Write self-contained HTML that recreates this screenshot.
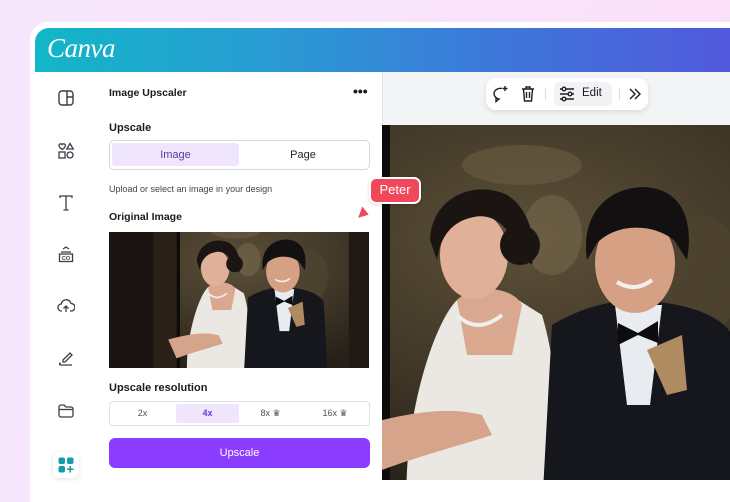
<!DOCTYPE html>
<html><head><meta charset="utf-8"><style>
*{margin:0;padding:0;box-sizing:border-box}
body{width:730px;height:480px;overflow:hidden;position:relative;font-family:"Liberation Sans",sans-serif;background:linear-gradient(100deg,#f6e6fb 0%,#f9e3fb 60%,#fbdef8 100%)}
.card{position:absolute;left:30px;top:22px;width:720px;height:480px;background:#fff;border-radius:18px 0 0 0}
.hdr{position:absolute;left:35px;top:28px;width:700px;height:44px;border-radius:14px 0 0 0;background:linear-gradient(90deg,#12b6c8 0%,#2a9ad4 35%,#3d78da 65%,#5258dc 100%)}
.logo{position:absolute;left:47px;top:33px;color:#fff;font-family:"Liberation Serif",serif;font-style:italic;font-size:27px;letter-spacing:-0.5px}
.side svg{position:absolute}
.t{position:absolute;color:#1a1a1f;font-size:11px}
.b{font-weight:bold}
.canvas{position:absolute;left:382px;top:72px;width:348px;height:408px;background:#f3f4f6;border-left:1px solid #e6e7ea}
</style></head><body>
<div class="card"></div>
<div class="hdr"></div>
<div class="logo">Canva</div>

<div class="side">
<svg style="left:57px;top:89px" width="18" height="18" viewBox="0 0 18 18" fill="none" stroke="#3a3d45" stroke-width="1.4"><rect x="2" y="2" width="14" height="14" rx="3"/><path d="M10 2v14M10 8h6"/></svg>
<svg style="left:57px;top:142px" width="18" height="18" viewBox="0 0 18 18" fill="none" stroke="#3a3d45" stroke-width="1.3"><path d="M2 3.5a1.8 1.8 0 0 1 3.2-1 1.8 1.8 0 0 1 3.2 1c0 2-3.2 4-3.2 4S2 5.5 2 3.5z"/><path d="M13 1.5l3.2 5.5H9.8z"/><rect x="2" y="10" width="6" height="6"/><circle cx="13" cy="13" r="3"/></svg>
<svg style="left:57px;top:194px" width="18" height="18" viewBox="0 0 18 18" fill="none" stroke="#3a3d45" stroke-width="1.3"><path d="M3 4V2h12v2M9 2v14M6.5 16h5"/></svg>
<svg style="left:57px;top:246px" width="18" height="18" viewBox="0 0 18 18" fill="none" stroke="#3a3d45" stroke-width="1.3"><path d="M6 3l3-2 3 2M4 6h10M2.5 8h13v7.5h-13z"/><text x="9" y="14" font-size="5.5" text-anchor="middle" fill="#3a3d45" stroke="none" font-weight="bold">CO</text></svg>
<svg style="left:57px;top:297px" width="18" height="18" viewBox="0 0 18 18" fill="none" stroke="#3a3d45" stroke-width="1.3"><path d="M5 14H4.5a3.5 3.5 0 0 1-.3-7A5 5 0 0 1 14 6.5a3.7 3.7 0 0 1 .3 7.5H13"/><path d="M9 15V9M6.5 11.5L9 9l2.5 2.5"/></svg>
<svg style="left:57px;top:349px" width="18" height="18" viewBox="0 0 18 18" fill="none" stroke="#3a3d45" stroke-width="1.3"><path d="M6 11l7-7 2 2-7 7H6z"/><path d="M4 14c-2 0-2 2 0 2h11"/></svg>
<svg style="left:57px;top:402px" width="18" height="18" viewBox="0 0 18 18" fill="none" stroke="#3a3d45" stroke-width="1.3"><path d="M2 5a2 2 0 0 1 2-2h3l2 2h5a2 2 0 0 1 2 2v6a2 2 0 0 1-2 2H4a2 2 0 0 1-2-2z"/><path d="M2 7.5h14"/></svg>
<div style="position:absolute;left:53px;top:452px;width:26px;height:26px;border-radius:6px;background:#fff;box-shadow:0 1px 4px rgba(0,0,0,.12)"></div>
<svg style="left:58px;top:457px" width="16" height="16" viewBox="0 0 16 16" fill="#159aa8"><rect x="0.5" y="0.5" width="6.5" height="6.5" rx="2"/><rect x="9" y="0.5" width="6.5" height="6.5" rx="2"/><rect x="0.5" y="9" width="6.5" height="6.5" rx="2"/><path d="M12.25 9v6.5M9 12.25h6.5" stroke="#159aa8" stroke-width="1.6"/></svg>
</div>

<div class="t b" style="left:109px;top:87px;font-size:10.5px">Image Upscaler</div>
<div class="t b" style="left:353px;top:83px;font-size:14px">•••</div>
<div class="t b" style="left:109px;top:122px;font-size:11px">Upscale</div>
<div style="position:absolute;left:109px;top:140px;width:261px;height:30px;border:1px solid #d7d8dc;border-radius:5px"></div>
<div style="position:absolute;left:112px;top:143px;width:127px;height:23px;background:#efe6fd;border-radius:3px"></div>
<div class="t" style="left:112px;top:149px;width:127px;text-align:center;color:#5a3a9a;font-size:11px">Image</div>
<div class="t" style="left:239px;top:149px;width:128px;text-align:center;color:#222;font-size:11px">Page</div>
<div class="t" style="left:109px;top:184px;font-size:9px;color:#444">Upload or select an image in your design</div>
<div class="t b" style="left:109px;top:211px;font-size:10.5px">Original Image</div>

<svg width="0" height="0" style="position:absolute"><defs>
<radialGradient id="bk" cx="50%" cy="30%" r="70%"><stop offset="0" stop-color="#5c5038"/><stop offset=".6" stop-color="#3e3526"/><stop offset="1" stop-color="#262019"/></radialGradient>
<g id="scene">
<rect x="-170" y="0" width="640" height="380" fill="url(#bk)"/>
<ellipse cx="140" cy="40" rx="60" ry="20" fill="#6a5d45" opacity=".6"/>
<ellipse cx="170" cy="110" rx="30" ry="40" fill="#7a6c50" opacity=".5"/>
<ellipse cx="320" cy="150" rx="40" ry="60" fill="#4e4530" opacity=".7"/>
<rect x="-170" y="0" width="120" height="380" fill="#1a1512"/>
<rect x="-55" y="0" width="60" height="380" fill="#2a2118"/>
<rect x="0" y="0" width="8" height="380" fill="#0e0c0a"/>
<rect x="410" y="0" width="60" height="380" fill="#201a14"/>
<path d="M25 385 C20 300 50 200 75 175 L125 168 L160 190 C175 240 178 300 172 385 Z" fill="#ebe8e4"/>
<path d="M75 175 C90 160 130 160 140 180 L130 230 L85 230 Z" fill="#d9a88f"/>
<path d="M-20 300 C20 290 60 280 100 290 L110 310 C80 320 40 330 0 345 Z" fill="#d6a48a"/>
<ellipse cx="92" cy="130" rx="34" ry="44" fill="#e0b099"/>
<path d="M48 115 C50 70 95 55 125 70 C145 82 155 110 150 140 L138 130 C128 100 110 88 92 92 C70 96 58 112 55 135 Z" fill="#1a1512"/>
<circle cx="138" cy="120" r="20" fill="#1a1512"/>
<path d="M75 190 Q95 210 120 190" stroke="#eee" stroke-width="4" fill="none"/>
<path d="M160 385 L170 200 C200 182 230 175 255 176 C300 176 340 190 350 210 L360 385 Z" fill="#16171d"/>
<path d="M233 180 L280 180 L268 280 L245 280 Z" fill="#e8ebf0"/>
<path d="M236 198 L256 208 L276 196 L276 218 L256 210 L236 220 Z" fill="#0c0c10"/>
<path d="M265 225 L300 210 L305 265 L285 270 Z" fill="#b08a60"/>
<ellipse cx="253" cy="138" rx="40" ry="50" fill="#d6a084"/>
<path d="M205 135 C198 85 230 62 262 62 C300 64 312 95 305 135 L292 115 C270 98 235 98 215 118 Z" fill="#121010"/>
<path d="M235 157 Q253 168 270 155" stroke="#f4f0ea" stroke-width="4" fill="none"/>
</g></defs></svg>

<svg style="position:absolute;left:109px;top:232px" width="260" height="136" viewBox="-161 44 619 324" preserveAspectRatio="xMidYMid slice"><use href="#scene"/></svg>

<div class="t b" style="left:109px;top:382px;font-size:11px">Upscale resolution</div>
<div style="position:absolute;left:109px;top:401px;width:261px;height:25px;border:1px solid #e0e1e4;border-radius:4px"></div>
<div style="position:absolute;left:176px;top:404px;width:63px;height:19px;background:#efe6fd;border-radius:2px"></div>
<div class="t" style="left:109px;top:408px;width:67px;text-align:center;font-size:9px;color:#555">2x</div>
<div class="t b" style="left:176px;top:408px;width:63px;text-align:center;font-size:9px;color:#6a3bd0">4x</div>
<div class="t" style="left:239px;top:408px;width:63px;text-align:center;font-size:9px;color:#555">8x ♛</div>
<div class="t" style="left:302px;top:408px;width:66px;text-align:center;font-size:9px;color:#555">16x ♛</div>
<div style="position:absolute;left:109px;top:438px;width:261px;height:30px;background:#8b3dff;border-radius:6px;color:#fff;font-size:11px;text-align:center;line-height:30px">Upscale</div>

<div class="canvas"></div>
<svg style="position:absolute;left:382px;top:125px" width="348" height="355" viewBox="0 0 348 355"><use href="#scene"/></svg>
<div style="position:absolute;left:486px;top:78px;width:162px;height:32px;background:#fff;border-radius:10px;box-shadow:0 2px 6px rgba(0,0,0,.1)"></div>
<div style="position:absolute;left:554px;top:82px;width:58px;height:24px;background:#f1f2f4;border-radius:6px"></div>
<svg style="position:absolute;left:491px;top:85px" width="20" height="18" viewBox="0 0 20 18" fill="none" stroke="#1e1f24" stroke-width="1.4"><path d="M11 3.5A6 5 0 1 0 8 14L5 16.5V13"/><path d="M14 1v5M11.5 3.5h5"/></svg>
<svg style="position:absolute;left:520px;top:85px" width="16" height="18" viewBox="0 0 16 18" fill="none" stroke="#1e1f24" stroke-width="1.4"><path d="M2 4h12M6 4V2h4v2M3.5 4l1 12h7l1-12M6.5 7v6M9.5 7v6"/></svg>
<div style="position:absolute;left:545px;top:88px;width:1px;height:12px;background:#ddd"></div>
<svg style="position:absolute;left:558px;top:85px" width="18" height="18" viewBox="0 0 18 18" fill="none" stroke="#1e1f24" stroke-width="1.4"><path d="M2 4h14M2 9h14M2 14h14"/><circle cx="6" cy="4" r="1.8" fill="#f1f2f4"/><circle cx="12" cy="9" r="1.8" fill="#f1f2f4"/><circle cx="6" cy="14" r="1.8" fill="#f1f2f4"/></svg>
<div class="t" style="left:582px;top:87px;font-size:11.5px">Edit</div>
<div style="position:absolute;left:619px;top:88px;width:1px;height:12px;background:#ddd"></div>
<svg style="position:absolute;left:627px;top:86px" width="16" height="16" viewBox="0 0 16 16" fill="none" stroke="#1e1f24" stroke-width="1.4"><path d="M3 3l5 5-5 5M8 3l5 5-5 5"/></svg>

<div style="position:absolute;left:369px;top:177px;width:52px;height:27px;background:#f0475a;border:2px solid #fff;border-radius:7px;color:#fff;font-size:13px;text-align:center;line-height:22px;box-shadow:0 1px 3px rgba(0,0,0,.15)">Peter</div>
<svg style="position:absolute;left:354px;top:202px" width="20" height="20" viewBox="0 0 20 20"><path d="M3 17L8 3L16 13Z" fill="#f0475a" stroke="#fff" stroke-width="1.5" stroke-linejoin="round"/></svg>
</body></html>
